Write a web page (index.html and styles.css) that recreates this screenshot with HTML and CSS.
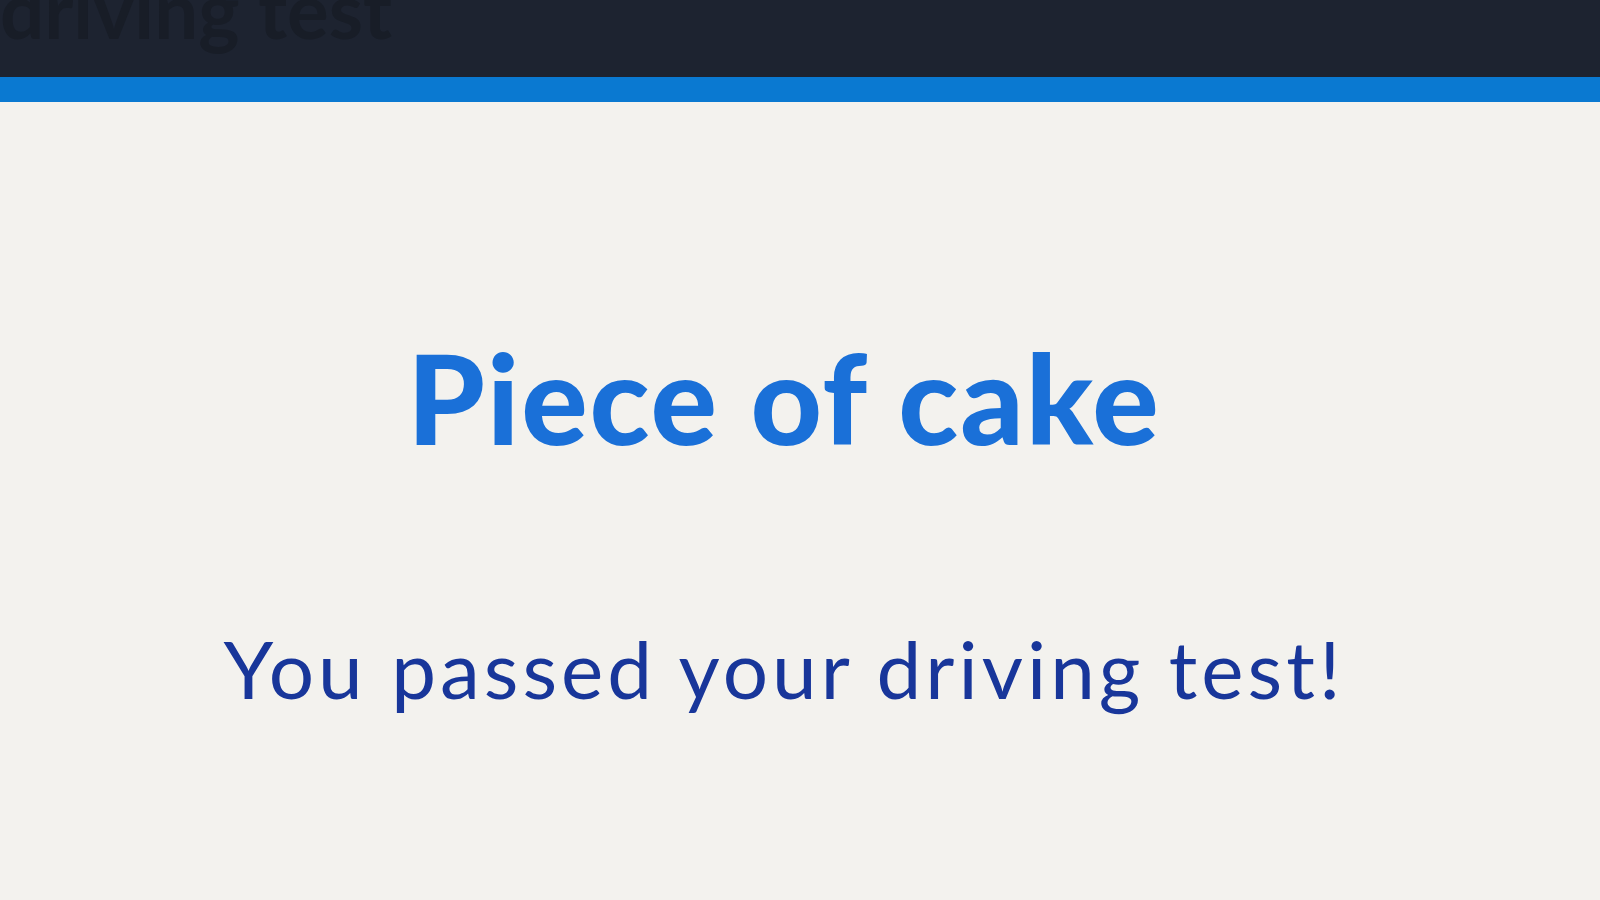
FILE: index.html
```html
<!DOCTYPE html>
<html lang="en">
<head>
  <meta charset="UTF-8">
  <meta name="viewport" content="width=device-width, initial-scale=1.0">
  <title>Driving Test</title>
  <link rel="stylesheet" href="styles.css">
</head>
<body>
  <header class="topbar">
    <span class="topbar-title">driving test</span>
  </header>
  <div class="stripe"></div>

  <main class="result">
    <h1 class="result-title">Piece of cake</h1>
    <p class="result-message">You passed your driving test!</p>
  </main>
</body>
</html>
```

FILE: styles.css
```css
html, body {
  margin: 0;
  height: 100%;
}
body {
  font-family: Lato, "Noto Sans", sans-serif;
  background-color: #f3f2ee;
  display: flex;
  flex-direction: column;
  overflow: hidden;
}
.topbar {
  height: 77px;
  background-color: #1d2330;
  overflow: hidden;
}
.topbar-title {
  display: block;
  margin-top: -30px;
  font-size: 78px;
  font-weight: 700;
  line-height: 1;
  color: #181d27;
}
.stripe {
  height: 25px;
  background-color: #0a79d1;
}
.result {
  flex: 1;
  display: flex;
  flex-direction: column;
  align-items: center;
  padding-right: 32px;
}
.result-title {
  margin: 233px 0 0;
  font-size: 124px;
  font-weight: 900;
  line-height: 1;
  letter-spacing: 2px;
  color: #1a70d8;
}
.result-message {
  margin: 169px 0 0;
  font-size: 80px;
  font-weight: 400;
  line-height: 1;
  letter-spacing: 4px;
  color: #18369a;
}
```
